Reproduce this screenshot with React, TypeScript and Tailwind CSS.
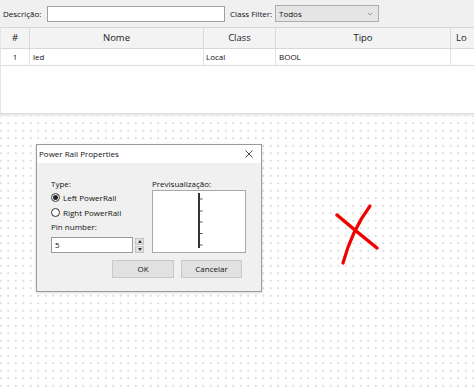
import { ChevronDown } from 'lucide-react'

const FONT = "font-['Open_Sans','Noto_Sans',sans-serif]"

function Radio({ checked, label }: { checked?: boolean; label: string }) {
  return (
    <div className="flex items-center h-[15px] gap-[3px]">
      <span className="w-[9px] h-[9px] rounded-full border border-[#333] bg-white flex items-center justify-center">
        {checked && <span className="w-[5px] h-[5px] rounded-full bg-[#222]" />}
      </span>
      <span>{label}</span>
    </div>
  )
}

function Preview() {
  const pins = [8, 20, 31, 42.5, 54]
  return (
    <div className="w-[94px] h-[63px] border border-[#a8a8a8] bg-white">
      <svg width="92" height="61" viewBox="0 0 92 61">
        <line x1="46" y1="2" x2="46" y2="57" stroke="#333" strokeWidth="2" />
        {pins.map(y => (
          <line key={y} x1="47" y1={y} x2="49.5" y2={y} stroke="#555" strokeWidth="1" />
        ))}
      </svg>
    </div>
  )
}

function Dialog() {
  return (
    <div className="absolute left-[36px] top-[28px] w-[226px] h-[148px] border border-[#9a9a9a] bg-[#f0f0f0] shadow-[0_1px_3px_rgba(0,0,0,0.15)] text-[8px] text-[#111]">
      {/* title bar */}
      <div className="h-[18px] bg-white flex items-center justify-between pl-[2px] pr-[8px]">
        <span className="text-[8px]">Power Rail Properties</span>
        <svg width="8" height="8" viewBox="0 0 8 8">
          <path d="M0.5 0.5L7.5 7.5M7.5 0.5L0.5 7.5" stroke="#333" strokeWidth="0.9" />
        </svg>
      </div>

      <div className="pl-[14px] pt-[15px] pr-[18px]">
        <div className="flex gap-[8px]">
          <div className="w-[94px] flex flex-col">
            <div className="h-[12px] leading-[12px]">Type:</div>
            <Radio checked label="Left PowerRail" />
            <Radio label="Right PowerRail" />
            <div className="h-[12px] leading-[12px] mt-[1px]">Pin number:</div>
            <div className="mt-[4px] flex items-center gap-[2px]">
              <div className="w-[82px] h-[16px] border border-[#9a9a9a] bg-white pl-[3px] leading-[14px]">5</div>
              <div className="flex flex-col gap-[1px]">
                <div className="w-[9px] h-[7px] bg-[#e1e1e1] border border-[#c4c4c4] flex items-center justify-center">
                  <svg width="4" height="3" viewBox="0 0 4 3"><path d="M0 3L2 0L4 3Z" fill="#333" /></svg>
                </div>
                <div className="w-[9px] h-[7px] bg-[#e1e1e1] border border-[#c4c4c4] flex items-center justify-center">
                  <svg width="4" height="3" viewBox="0 0 4 3"><path d="M0 0L2 3L4 0Z" fill="#333" /></svg>
                </div>
              </div>
            </div>
          </div>
          <div className="flex flex-col">
            <div className="h-[12px] leading-[12px]">Previsualização:</div>
            <Preview />
          </div>
        </div>
        <div className="flex justify-end gap-[7px] mt-[7px] pr-[1px]">
          <button className="w-[62px] h-[18px] bg-[#e1e1e1] border border-[#c8c8c8] text-[8px]">OK</button>
          <button className="w-[61px] h-[18px] bg-[#e1e1e1] border border-[#c8c8c8] text-[8px]">Cancelar</button>
        </div>
      </div>
    </div>
  )
}

export default function App() {
  const cols = 'grid grid-cols-[29px_174px_72px_175px_1fr]'
  return (
    <div className={`w-[474px] h-[390px] overflow-hidden bg-white flex flex-col ${FONT}`}>
      {/* filter bar */}
      <div className="h-[27px] bg-[#f0f0f0] flex items-center text-[8px] text-[#111] shrink-0">
        <span className="pl-[3px] w-[47px]">Descrição:</span>
        <div className="w-[178px] h-[16px] bg-white border border-[#a0a0a0]" />
        <span className="ml-[5px] w-[45px]">Class Filter:</span>
        <div className="w-[104px] h-[17px] bg-[#e5e5e5] border border-[#adadad] flex items-center justify-between pl-[3px] pr-[4px]">
          <span>Todos</span>
          <ChevronDown size={8} strokeWidth={1.5} color="#555" />
        </div>
      </div>

      {/* table */}
      <div className="h-[86px] shrink-0 border-l border-[#e4e4e4]">
        <div className={`${cols} h-[22px] bg-[#f3f3f3] border-y border-[#d8d8d8] text-[9.5px] text-[#222]`}>
          <div className="flex items-center justify-center border-r border-[#d8d8d8]">#</div>
          <div className="flex items-center justify-center border-r border-[#d8d8d8]">Nome</div>
          <div className="flex items-center justify-center border-r border-[#d8d8d8]">Class</div>
          <div className="flex items-center justify-center border-r border-[#d8d8d8]">Tipo</div>
          <div className="flex items-center pl-[5px] overflow-hidden whitespace-nowrap">Lo</div>
        </div>
        <div className={`${cols} h-[17px] border-b border-[#dcdcdc] text-[8px] text-[#111]`}>
          <div className="flex items-center justify-center border-r border-[#e4e4e4]">1</div>
          <div className="flex items-center pl-[3px] border-r border-[#e4e4e4]">led</div>
          <div className="flex items-center pl-[2px] border-r border-[#e4e4e4]">Local</div>
          <div className="flex items-center pl-[3px] border-r border-[#e4e4e4]">BOOL</div>
          <div />
        </div>
      </div>

      {/* splitter */}
      <div className="h-[3px] shrink-0 bg-[#ebebeb] border-t border-[#dadada]" />

      {/* canvas */}
      <div className="relative flex-1 bg-white bg-[radial-gradient(circle,#d2d2d2_0.6px,transparent_0.9px)] bg-[length:7.5px_7.5px] bg-[position:4.5px_3.5px]">
        <Dialog />
        <svg className="absolute left-0 top-0" width="474" height="274" viewBox="0 116 474 274">
          <path d="M337 215 Q357 232 377 248" stroke="#f00000" strokeWidth="3.5" strokeLinecap="round" fill="none" />
          <path d="M370 206 Q352 230 343 263" stroke="#f00000" strokeWidth="3.2" strokeLinecap="round" fill="none" />
        </svg>
      </div>
    </div>
  )
}
